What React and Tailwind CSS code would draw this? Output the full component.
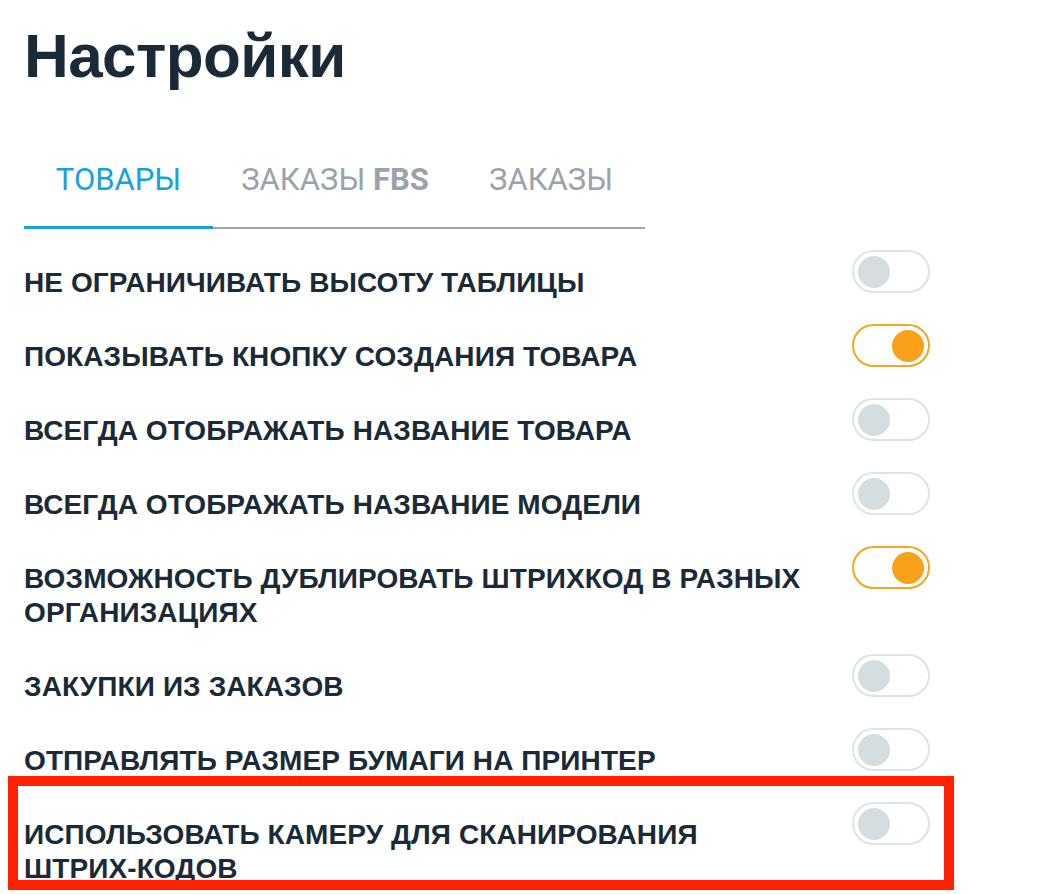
import React from "react";

const settings = [
  { label: "НЕ ОГРАНИЧИВАТЬ ВЫСОТУ ТАБЛИЦЫ", on: false },
  { label: "ПОКАЗЫВАТЬ КНОПКУ СОЗДАНИЯ ТОВАРА", on: true },
  { label: "ВСЕГДА ОТОБРАЖАТЬ НАЗВАНИЕ ТОВАРА", on: false },
  { label: "ВСЕГДА ОТОБРАЖАТЬ НАЗВАНИЕ МОДЕЛИ", on: false },
  { label: "ВОЗМОЖНОСТЬ ДУБЛИРОВАТЬ ШТРИХКОД В РАЗНЫХ ОРГАНИЗАЦИЯХ", on: true },
  { label: "ЗАКУПКИ ИЗ ЗАКАЗОВ", on: false },
  { label: "ОТПРАВЛЯТЬ РАЗМЕР БУМАГИ НА ПРИНТЕР", on: false },
  { label: "ИСПОЛЬЗОВАТЬ КАМЕРУ ДЛЯ СКАНИРОВАНИЯ ШТРИХ\u2011КОДОВ", on: false, marked: true },
];

function Toggle({ on, onClick }) {
  return (
    <button
      type="button"
      onClick={onClick}
      className={
        on
          ? "shrink-0 w-[78px] h-[43px] rounded-full border-2 border-[#f5a623] bg-white flex items-center justify-end px-[4px]"
          : "shrink-0 w-[78px] h-[43px] rounded-full border-2 border-[#dde3e6] bg-white flex items-center justify-start px-[4px]"
      }
    >
      <span
        className={
          on
            ? "block w-[32px] h-[32px] rounded-full bg-[#f9a11b]"
            : "block w-[32px] h-[32px] rounded-full bg-[#d5dde1]"
        }
      />
    </button>
  );
}

const tabBase = "h-[72px] pb-[22px] -mb-[2px] border-b-[3px] text-[31px]";

export default function App() {
  const [tab, setTab] = React.useState(0);
  const [items, setItems] = React.useState(settings);

  const toggle = (i) => {
    setItems(items.map((it, idx) => (idx === i ? { ...it, on: !it.on } : it)));
  };

  return (
    <div className="bg-white min-h-[894px] pl-[24px] text-[#1b2a37] font-['Liberation_Sans',Arial,sans-serif]">
      <h1 className="pt-[25px] text-[62px] leading-none font-bold tracking-[-0.6px]">Настройки</h1>

      <div className="mt-[70px] w-[621px] flex border-b-2 border-[#9ea5aa] font-['Roboto',sans-serif]">
        <button
          type="button"
          onClick={() => setTab(0)}
          className={`w-[189px] ${tabBase} ${tab === 0 ? "border-[#17a2dc] text-[#17a2dc]" : "border-transparent text-[#9aa3a9]"}`}
        >
          ТОВАРЫ
        </button>
        <button
          type="button"
          onClick={() => setTab(1)}
          className={`w-[244px] ${tabBase} ${tab === 1 ? "border-[#17a2dc] text-[#17a2dc]" : "border-transparent text-[#9aa3a9]"}`}
        >
          ЗАКАЗЫ <span className="font-bold">FBS</span>
        </button>
        <button
          type="button"
          onClick={() => setTab(2)}
          className={`w-[188px] ${tabBase} ${tab === 2 ? "border-[#17a2dc] text-[#17a2dc]" : "border-transparent text-[#9aa3a9]"}`}
        >
          ЗАКАЗЫ
        </button>
      </div>

      <div className="w-[906px] mt-[21px] flex flex-col gap-[24px]">
        {items.map((it, i) => (
          <div key={i} className="relative flex justify-between items-start">
            <div className="mt-[16px] max-w-[810px] text-[28px] leading-[34px] font-bold tracking-[0.1px]">
              {it.label}
            </div>
            <Toggle on={it.on} onClick={() => toggle(i)} />
            {it.marked && (
              <div className="absolute left-[-16px] top-[-26px] w-[946px] h-[114px] border-[10px] border-[#ff2200] pointer-events-none" />
            )}
          </div>
        ))}
      </div>
    </div>
  );
}
